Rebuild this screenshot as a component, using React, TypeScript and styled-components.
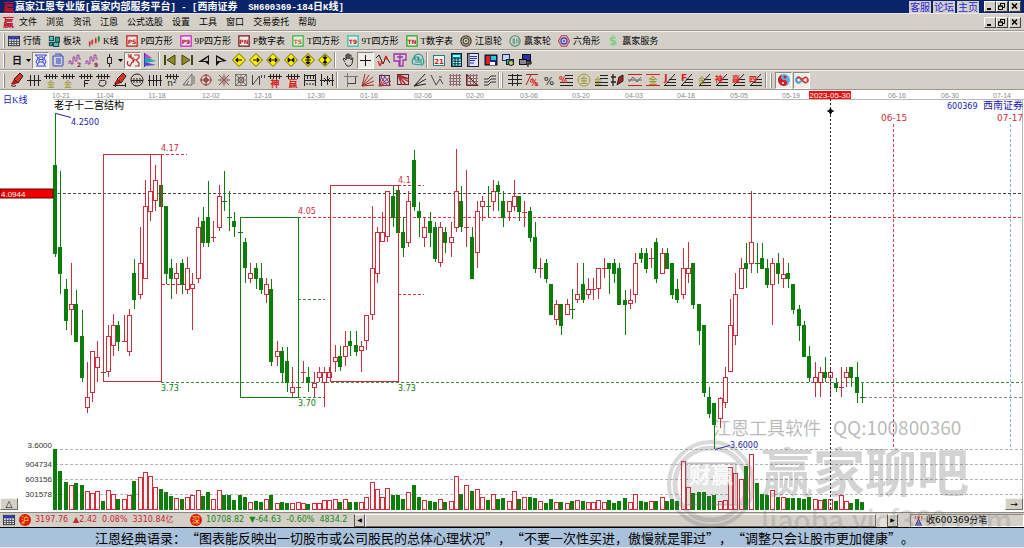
import React from 'react';
import styled, { createGlobalStyle } from 'styled-components';

const SONG = `"Liberation Serif", "Noto Sans CJK SC", serif`;
const VERDANA = `"DejaVu Sans", "Noto Sans CJK SC", sans-serif`;
const CJK = `"Noto Sans CJK SC", sans-serif`;
const RED = '#d02c3c';
const GREEN = '#0a7d0a';

const Global = createGlobalStyle`
  *, *::before, *::after { box-sizing: border-box; }
  body { margin: 0; background: #fff; font-family: ${SONG}; font-size: 9px; color: #000; }
  button { font: inherit; color: inherit; padding: 0; margin: 0; border: 0; background: none; }
  a { color: inherit; text-decoration: none; }
`;

const Page = styled.div`
  position: relative;
  overflow: hidden;
  border-bottom: 1px solid #e8e6e2;
`;

const TitleBar = styled.header`
  display: flex;
  align-items: center;
  height: 14px;
  padding: 0 3px;
  background: #0a246a;
  border-bottom: 1px solid #e8e6e0;
`;

const TitleText = styled.h1`
  flex: 1;
  margin: 0 0 0 1px;
  color: #fff;
  font: bold 10px/12px ${CJK};
  white-space: pre;
`;

const Latin = styled.span`
  font: bold 9px/12px "Liberation Mono", monospace;
`;

const Brand = styled.span`
  width: 11px;
  font: 900 11px/12px ${CJK};
  color: #c0142c;
`;

const TitleLink = styled.a`
  width: 22px;
  height: 12px;
  margin-right: 2px;
  background: #d4d0c8;
  color: #2424e0;
  font: 10px/12px ${CJK};
  text-align: center;
`;

const WinButtons = styled.div`
  display: flex;
  margin-left: 3px;
`;

const WinButton = styled.button<{ $apart?: boolean }>`
  display: flex;
  width: 12px;
  height: 11px;
  margin-left: ${(p) => (p.$apart ? '1px' : '0')};
  background: #d4d0c8;
  border: 1px solid;
  border-color: #fff #404040 #404040 #fff;
`;

const MenuBar = styled.nav`
  display: flex;
  align-items: center;
  height: 17px;
  padding: 0 3px;
  background: #d4d0c8;
  border-bottom: 1px solid #9c9890;
`;

const MenuList = styled.div`
  display: flex;
  flex: 1;
  gap: 9px;
  margin-left: 5px;
`;

const MenuItem = styled.button`
  line-height: 12px;
  white-space: nowrap;
`;

const Toolbar = styled.div<{ $h: number }>`
  display: flex;
  align-items: center;
  height: ${(p) => p.$h}px;
  padding-left: 3px;
  background: #d4d0c8;
  border-top: 1px solid #f4f2ee;
  border-bottom: 1px solid #9c9890;
`;

const Grip = styled.span`
  width: 2px;
  height: 15px;
  margin-right: 3px;
  border-left: 1px solid #fff;
  border-right: 1px solid #8c8880;
`;

const Divider = styled.span<{ $after: number }>`
  width: 2px;
  height: 16px;
  margin-right: ${(p) => p.$after}px;
  border-left: 1px solid #908c84;
  border-right: 1px solid #fff;
`;

const ModuleList = styled.div`
  display: flex;
  gap: 7px;
`;

const ModuleButton = styled.button`
  display: flex;
  align-items: center;
  gap: 3px;
  line-height: 12px;
  white-space: nowrap;
`;

const ToolGroup = styled.div<{ $w: number }>`
  display: flex;
  flex: none;
  justify-content: space-between;
  align-items: center;
  width: ${(p) => p.$w}px;
`;

const ToolButton = styled.button<{ $pressed?: boolean; $narrow?: boolean }>`
  display: flex;
  align-items: center;
  justify-content: center;
  width: ${(p) => (p.$narrow ? 7 : 17)}px;
  height: 17px;
  border: 1px solid;
  border-color: ${(p) => (p.$pressed ? '#8c8880 #fff #fff #8c8880' : 'transparent')};
  background: ${(p) => (p.$pressed ? '#efede9' : 'transparent')};
`;

const Glyph = styled.svg`
  display: block;
  flex: none;
  overflow: visible;
`;

const ChartPane = styled.main`
  position: relative;
  background: #fff;
`;

const ChartSvg = styled.svg`
  display: block;
  width: 100%;
  height: auto;
`;

const PaneButton = styled.button<{ $side: 'left' | 'right' }>`
  position: absolute;
  ${(p) => p.$side}: ${(p) => (p.$side === 'left' ? 0 : 1)}px;
  bottom: 2px;
  width: 18px;
  height: 12px;
  background: #d4d0c8;
  border: 1px solid;
  border-color: #f4f2ee #706c64 #706c64 #f4f2ee;
  font: 9px/9px "DejaVu Sans", sans-serif;
`;

const StatusBar = styled.footer`
  display: flex;
  align-items: center;
  height: 16px;
  padding-left: 3px;
  background: #d4d0c8;
  border-top: 1px solid #8c8880;
  border-bottom: 1px solid #000;
  font: 8px/14px ${VERDANA};
  white-space: nowrap;
`;

const Index = styled.div<{ $tone: string; $w: number }>`
  display: flex;
  flex: none;
  align-items: center;
  gap: 4px;
  width: ${(p) => p.$w}px;
  overflow: hidden;
  color: ${(p) => p.$tone};
`;

const Figures = styled.span`
  display: flex;
  gap: 5px;
`;

const Badge = styled.span`
  flex: none;
  width: 12px;
  height: 12px;
  border-radius: 50%;
  background: #e01808;
  color: #ffe860;
  font: 8px/12px ${CJK};
  text-align: center;
`;

const ScrollTrack = styled.div`
  display: flex;
  flex: 1;
  height: 13px;
  background: #e4e1db;
`;

const ScrollArrow = styled.button`
  width: 11px;
  background: #d4d0c8;
  border: 1px solid;
  border-color: #fff #55514a #55514a #55514a;
  font: 6px/8px "DejaVu Sans", sans-serif;
`;

const ScrollThumb = styled.div`
  flex: 1;
  margin-right: 11px;
  background: #d4d0c8;
  border: 1px solid;
  border-color: #fff #706c64 #706c64 #fff;
`;

const TickPanel = styled.div`
  display: flex;
  align-items: center;
  gap: 3px;
  width: 114px;
  height: 13px;
  margin-left: 12px;
  padding-left: 3px;
  border: 1px solid;
  border-color: #8c8880 #fff #fff #8c8880;
  font: 9px/12px ${VERDANA};
`;

const Ticker = styled.p`
  position: relative;
  z-index: 1;
  margin: 0;
  height: 19px;
  padding-left: 95px;
  background: #a8c2dc;
  font: 13px/19px ${CJK};
  text-spacing-trim: space-all;
  white-space: nowrap;
`;

const Watermark = styled.svg`
  position: absolute;
  right: 0;
  bottom: 0;
  pointer-events: none;
`;

/* ---------- icons ---------- */

type P = { d: string; c?: string; w?: number; f?: string };
const S = ({ d, c = '#222', w = 1, f = 'none' }: P) => <path d={d} stroke={c} strokeWidth={w} fill={f} />;
const F = ({ d, c = '#222' }: P) => <path d={d} fill={c} />;
const T = ({ t, c, x = 7, y = 12, s = 8, b = false }: { t: string; c: string; x?: number; y?: number; s?: number; b?: boolean }) => (
  <text x={x} y={y} fontSize={s} fontWeight={b ? 700 : 400} fill={c} textAnchor="middle" fontFamily={VERDANA}>{t}</text>
);
const Ico = ({ children, w = 14 }: { children: React.ReactNode; w?: number }) => (
  <Glyph width={w} height="14" viewBox={`0 0 ${w} 14`} aria-hidden="true">{children}</Glyph>
);
const Mod = ({ children }: { children: React.ReactNode }) => (
  <Glyph width="12" height="12" viewBox="0 0 14 14" aria-hidden="true">{children}</Glyph>
);

const table = (
  <>
    <rect x="0.5" y="1.5" width="13" height="11" fill="#dde4f8" stroke="#222" />
    <F d="M1 2h12v3h-12z" c="#3038b0" />
    <S d="M1 7.5h12M1 10h12M4 5v7M7 5v7M10 5v7" c="#444" />
  </>
);
const boxed = (t: string, c: string, inner = c) => (
  <>
    <rect x="1" y="1" width="12" height="12" fill="#efe9e4" stroke={c} strokeWidth="1.5" />
    <T t={t} c={inner} y={10} s={7} b />
  </>
);

const modules: [string, React.ReactNode][] = [
  ['行情', table],
  ['板块', <><rect x="1.5" y="1.5" width="5" height="5" fill="#40c8b0" stroke="#134" /><rect x="8.5" y="2.5" width="5" height="6" fill="#2c9c8c" stroke="#134" /><rect x="1.5" y="8.5" width="4" height="4" fill="#2c9c8c" stroke="#134" /><rect x="6.5" y="8.5" width="6" height="5" fill="#40c8b0" stroke="#134" /></>],
  ['K线', <><S d="M2 7v7M5 5v7M9 3v7M12.5 1v8" c="#666" /><F d="M1 8h2v4h-2zM8 4h2v5h-2z" c="#e02020" /><F d="M4 6h2v4h-2z" c="#e02020" /><F d="M11.500 2h2v5h-2z" c="#0a8a0a" /></>],
  ['P四方形', boxed('PS', '#c02020')],
  ['9P四方形', boxed('P9', '#d020d0', '#b01040')],
  ['P数字表', boxed('PN', '#702030', '#c02020')],
  ['T四方形', boxed('TS', '#30c040', '#c07020')],
  ['9T四方形', boxed('T9', '#30c0b0', '#c02020')],
  ['T数字表', boxed('TN', '#20b020', '#c02020')],
  ['江恩轮', <><circle cx="7" cy="7" r="6" fill="none" stroke="#702828" strokeWidth="1.5" /><circle cx="7" cy="7" r="3.500" fill="none" stroke="#286838" strokeWidth="1.5" /><circle cx="7" cy="7" r="1.200" fill="#b02020" /></>],
  ['赢家轮', <><circle cx="7" cy="7" r="6" fill="none" stroke="#508070" strokeWidth="1.200" /><S d="M4 5h3M4 7h3M4 9h3M9 4v6M11 5v4M6 4v7" c="#3c9c80" /></>],
  ['六角形', <><S d="M4 1h6l3.500 6-3.500 6h-6l-3.500-6z" c="#c83040" w={1.2} /><circle cx="7" cy="7" r="3.500" fill="none" stroke="#4040c0" strokeWidth="1.500" /><circle cx="7" cy="7" r="1.200" fill="#4040c0" /></>],
  ['赢家服务', <T t="$" c="#80d080" y={12} s={14} b />],
];

const wave = (n: string) => (
  <><S d="M1 11v-3h2v3h2v-7h2v4h2v-6h2v4h2" c="#a040a0" /><T t={n} c="#802040" x={11} y={14} s={6} b /></>
);
const diamond = (inner: string) => (
  <><path d="M7 0.500L13.500 7L7 13.500L0.500 7Z" fill="#f8f000" stroke="#6c6400" /><S d={inner} c="#000" w={1.2} /></>
);
const combSmall = <S d="M0 3.500h14M2.500 1v5M5.500 1v5M8.500 1v5M11.500 1v5" />;
const comb = <S d="M0 7.500h14M3.500 2v11M7.500 2v11M11.500 2v11" />;
const lines = <S d="M1 12.500h12M4 9.500h9M6 6.500h7M2 12L12 1" />;
const rows = <S d="M6 2.500h8M6 5.500h8M1 9.500h13M1 12.500h13" />;
const fan = (c: string) => <S d="M1 13L4 1M1 13L8 2M1 13L12 4M1 13L13 8M1 13L13 12" c={c} />;
const grid = <S d="M1 2.500h12M1 5.500h12M1 8.500h12M1 11.500h12M2.500 1v12M5.500 1v12M8.500 1v12M11.500 1v12" c="#8c6c6c" />;
const brush = <><path d="M1 11l3-5 4 4-5 2z" fill="#c01818" /><path d="M4 6l6-6 3 3-5 7z" fill="#e03020" stroke="#222" /></>;
const arcs = <S d="M7 1a6 6 0 1 0 0 12a6 6 0 1 0 0-12M1 7.500h12M4 5v5M7 5v5M10 5v5" />;

type Tool = { n: string; i: React.ReactNode; on?: boolean; thin?: boolean };
const drop = <Ico w={5}><F d="M0 6h5l-2.500 3z" c="#000" /></Ico>;

const viewA: Tool[] = [
  { n: '日线周期', i: <Ico><T t="日" c="#111" y={11} s={10} b /></Ico> },
  { n: '周期列表', i: drop, thin: true },
  { n: '画图', on: true, i: <Ico><S d="M1 2h12M2 13h10M2 2l2 3-2 4 2 3M12 2l-2 3 2 4-2 3M5 4h4v5h-4zM5 9l-2 3M9 9l2 3M5 6.500h4" c="#3040e0" /></Ico> },
  { n: '信息', i: <Ico><S d="M2 3h10v9q0 1-1 1h-8q-1 0-1-1zM4 1h6v2M5 6h5M5 8h5M5 10h5" c="#3040d0" /></Ico> },
  { n: '二段', i: <Ico>{wave('2')}</Ico> },
  { n: '九段', i: <Ico>{wave('9')}</Ico> },
  { n: '蜡烛', i: <Ico><S d="M7.500 1v3M7.500 11v3M5.500 4.500h4v6h-4z" c="#222" /></Ico> },
  { n: '蜡烛列表', i: drop, thin: true },
  { n: '方阵', on: true, i: <Ico><S d="M2 4h3v-3M2 1l4 5M2 8q-2 4 2 5l2-4M8 2h5v3l-3 2 3 3v3h-4M7 4v6M9 6l-2 3" c="#c02828" w={1.2} /></Ico> },
  { n: '分布', i: <Ico><F d="M2 0l7 5-7 2z" c="#d040c0" /><F d="M2 4l11 4-11 2z" c="#20a8a8" /><F d="M2 9l11 3-11 1z" c="#6048d0" /><S d="M1.500 0v14" c="#3040c0" /></Ico> },
];
const viewB: Tool[] = [
  { n: '最前', i: <Ico><path d="M12 2v10L4 7z" fill="#8c8c20" stroke="#444410" /><S d="M2 2v10" w={2} c="#444410" /></Ico> },
  { n: '最后', i: <Ico><path d="M2 2v10l8-5z" fill="#8c8c20" stroke="#444410" /><S d="M12 2v10" w={2} c="#444410" /></Ico> },
  { n: '向左', i: <Ico><F d="M12 2v10l-4-3h-7z" c="#111" /><F d="M11 4v4h-5z" c="#bbb" /></Ico> },
  { n: '向右', i: <Ico><F d="M2 2v11l4-4 7-1z" c="#111" /><F d="M3 4l6 4h-6z" c="#bbb" /></Ico> },
  { n: '左移', i: <Ico>{diamond('M4 7h6M6 5l-2 2 2 2')}</Ico> },
  { n: '右移', i: <Ico>{diamond('M4 7h6M8 5l2 2-2 2')}</Ico> },
  { n: '横向放大', i: <Ico>{diamond('M3 7h8M5 5l-2 2 2 2M9 5l2 2-2 2')}</Ico> },
  { n: '横向缩小', i: <Ico>{diamond('M3 7h8M4 5l2 2-2 2M10 5l-2 2 2 2')}</Ico> },
  { n: '纵向放大', i: <Ico>{diamond('M7 3v8M5 5l2-2 2 2M5 9l2 2 2-2M4 7h6')}</Ico> },
  { n: '纵向缩小', i: <Ico>{diamond('M7 2v10M5 4l2 2 2-2M5 10l2-2 2 2')}</Ico> },
];
const viewC: Tool[] = [
  { n: '拖动', i: <Ico><S d="M4 9l-2-3 1-1 2 2v-5h1v4M6 6v-5h2v5M8 6v-4h2v5l1-2h1l-1 6-2 2h-3l-2-3" c="#333" /></Ico> },
  { n: '十字光标', on: true, i: <Ico><S d="M7.500 2v11M2 7.500h11" c="#111" /></Ico> },
  { n: '转折', i: <Ico><S d="M0 5l3-3 4 9 3-7 4 6" /><T t="v" c="#e02020" x={4} y={13} s={8} b /><T t="A" c="#e02020" x={10} y={7} s={6} b /></Ico> },
  { n: '标记', i: <Ico><S d="M1 1h12v6h-3v6h-4v-5h-5zM4 4h6M7 2v10" c="#a030b0" w={1.3} /></Ico> },
  { n: '云图', i: <Ico><S d="M2 11q-2-4 1-6 0-4 5-4 4 1 4 5 2 4-1 6zM4 4h3v3h-3zM8 4v6M10 6v5M4 9h3" c="#209c98" w={1.2} /></Ico> },
];
const viewD: Tool[] = [
  { n: '日历', i: <Ico><rect x="1.500" y="2.500" width="11" height="10" fill="#f4f4f4" stroke="#208080" /><T t="21" c="#d02020" y={11} s={7} b /></Ico> },
  { n: '计算器', i: <Ico><rect x="2.500" y="0.500" width="10" height="13" fill="#107c94" stroke="#023" /><F d="M4 2h7v2h-7z" c="#9fe" /><S d="M4 7h8M4 9.500h8M4 12h8" c="#fff" /><S d="M6 5v9M9 5v9" c="#023" /></Ico> },
  { n: '表格', i: <Ico><rect x="1.500" y="0.500" width="11" height="13" fill="#dfe4ff" stroke="#222" /><S d="M4 3.500h7M4 5.500h7M4 7.500h5M4 10h4" c="#3030c0" /><S d="M3 0v14" /></Ico> },
  { n: '保存', i: <Ico><rect x="1" y="2" width="12" height="10" fill="#1a2890" stroke="#111" /><F d="M2 3h4v8h-4z" c="#e02020" /><F d="M7 3h5v4h-5z" c="#30c8c8" /><F d="M6 9h5v3h-5z" c="#fff" /></Ico> },
  { n: '复制', i: <Ico><rect x="1.500" y="1.500" width="7" height="6" fill="#c8d0f0" stroke="#222870" /><rect x="5.500" y="6.500" width="7" height="5" fill="#40a080" stroke="#123" /><circle cx="10" cy="10" r="2.500" fill="#c8d060" stroke="#123" /></Ico> },
  { n: '联机', i: <Ico><rect x="4.500" y="1.500" width="8" height="6" fill="#2830b0" stroke="#111" /><rect x="1.500" y="6.500" width="7" height="5" fill="#888" stroke="#111" /><path d="M8 8h5v3h-3v3" fill="#555" stroke="#111" /></Ico> },
];

const drawA: Tool[] = [
  { n: '画笔', i: <Ico>{brush}<S d="M1 12.500q3 2 5 0" /></Ico> },
  { n: '等分', i: <Ico>{comb}</Ico> },
  { n: '黄金分割一', i: <Ico>{combSmall}<T t="金" c="#908c10" y={14} s={8} /></Ico> },
  { n: '黄金分割二', i: <Ico>{combSmall}<T t="金" c="#908c10" y={14} s={8} /></Ico> },
  { n: '斐波那契', i: <Ico>{combSmall}<S d="M5.500 14v-6.500h5M5 10.500h4" /></Ico> },
  { n: '螺旋', i: <Ico>{combSmall}<S d="M3 8q8-2 7 2t-5 3-1-4" /></Ico> },
  { n: '标尺笔', i: <Ico>{brush}<S d="M0 12.500h13M2.500 10v4M12.500 10v4" /></Ico> },
  { n: '圆周', i: <Ico>{arcs}</Ico> },
  { n: '周期线', i: <Ico><S d="M0 7.500h14M1.500 2v11M5.500 2v11M8.500 2v11M12.500 2v11" /></Ico> },
  { n: '平方', i: <Ico>{combSmall}<T t="n²" c="#222" y={13} s={9} /></Ico> },
  { n: '角度', i: <Ico><S d="M1 12L10 1v11zM5 12q0-3 2-4M12 3v8" c="#666" /></Ico> },
  { n: '圆形', i: <Ico><circle cx="7" cy="7" r="5" fill="none" stroke="#c83030" /><S d="M1 7h12M7 1v12" c="#a02828" /><circle cx="7" cy="7" r="2" fill="none" stroke="#444" /></Ico> },
  { n: '八方', i: <Ico><S d="M1 7h12M7 1v12M2 2l10 10M2 12L12 2" c="#a04848" /><circle cx="7" cy="7" r="3.500" fill="none" stroke="#888" /></Ico> },
  { n: '方格', i: <Ico><rect x="1.500" y="1.500" width="11" height="11" fill="none" stroke="#777" /><S d="M1 7h12M7 1v12M2 2l10 10M2 12L12 2" c="#907070" /><rect x="4.500" y="4.500" width="5" height="5" fill="none" stroke="#666" /></Ico> },
  { n: '波浪', i: <Ico><S d="M1.500 2v10l7-9v9M10.500 2v3M13.500 2v3" c="#444" /></Ico> },
  { n: '神奇', i: <Ico>{combSmall}<T t="神" c="#e01818" y={14} s={9} b /></Ico> },
  { n: '赢家', i: <Ico>{combSmall}<T t="赢" c="#e01818" y={14} s={9} b /></Ico> },
  { n: '区间', i: <Ico><S d="M1.500 1v12M12.500 1v12M1 2.500h12M1 7.500h12M4.500 3v3M7.500 3v3M10.500 3v3M3 11h2M6 11h2M9 11h2" /></Ico> },
  { n: '对称', i: <Ico><S d="M1.500 1v12M7.500 3v9M12.500 1v12M0 7.500h14M4 5l2 2-2 2M10 5l-2 2 2 2" /></Ico> },
];
const drawB: Tool[] = [
  { n: '矩形', i: <Ico><rect x="3.500" y="3.500" width="8" height="7" fill="none" stroke="#444" /><S d="M0 3.500h14M3.500 0v14" c="#777" /></Ico> },
  { n: '扇形', i: <Ico>{fan('#a82828')}</Ico> },
  { n: '扇形方框', i: <Ico><rect x="1.500" y="2.500" width="10" height="10" fill="none" stroke="#302860" />{fan('#b03040')}<S d="M5 2l7 8M3 4l6 8" c="#5840b0" /></Ico> },
  { n: '反向扇形', i: <Ico><rect x="1.500" y="1.500" width="11" height="10" fill="none" stroke="#502840" /><S d="M2 2l4 10M2 2l8 10M2 2l11 7M2 2l11 4" c="#b02838" w={1.4} /></Ico> },
  { n: '速度线', i: <Ico><S d="M1 13L12 1M1 13L13 6M1 13L13 11" /></Ico> },
  { n: '折线', i: <Ico><S d="M1 2l5 10 4-6 3 5M9 4h3" c="#444" /></Ico> },
  { n: '网格', i: <Ico>{grid}</Ico> },
  { n: '网格角', i: <Ico>{grid}<S d="M1.500 1v11.500h12M1 1l12 12" c="#722" /></Ico> },
  { n: '平行线', i: <Ico><S d="M1 6h4l3-3h5M1 9h4l3-3h5M1 12h4l3-3h5" c="#333" /></Ico> },
];
const drawC: Tool[] = [
  { n: '江恩线', i: <Ico><S d="M0 2.500h14M0 6.500h14M0 10.500h14M4.500 1v12M9.500 1v12" /></Ico> },
  { n: '区间百分比', i: <Ico><S d="M1 1.500h12M1 12L6 2M7 5l6 8" c="#a02828" /><T t="%" c="#e02020" x={9} y={13} s={8} b /></Ico> },
  { n: '百分比', i: <Ico><T t="%" c="#222" y={12} s={11} /></Ico> },
  { n: '百分比线', i: <Ico>{rows}<T t="%" c="#e02020" x={4} y={10} s={8} b /></Ico> },
  { n: '金圆', i: <Ico><circle cx="7" cy="7" r="6" fill="none" stroke="#a09c20" /><T t="金" c="#908c10" y={10} s={8} /></Ico> },
  { n: '金线', i: <Ico>{rows}<T t="金" c="#908c10" x={4} y={11} s={8} /></Ico> },
  { n: '笔线', i: <Ico><S d="M2 1v12M0 4h5M0 9h5" w={1.3} /><path d="M6 12l2-8 4-2v6z" fill="#b02020" stroke="#222" /></Ico> },
  { n: '波段', i: <Ico><S d="M0 1.500h14M0 12.500h14" c="#c02020" /><S d="M1 9l4-5 4 5 4-5M0 7h14" c="#666" /></Ico> },
  { n: '金波段', i: <Ico><S d="M0 1.500h14M0 12.500h14" c="#e02020" /><T t="金" c="#908c10" y={11} s={9} /></Ico> },
  { n: 'J线', i: <Ico>{lines}<T t="J" c="#e02020" x={3} y={8} s={9} b /></Ico> },
  { n: 'F线', i: <Ico>{lines}<T t="F" c="#e02020" x={4} y={8} s={9} b /></Ico> },
  { n: '金斜线', i: <Ico>{lines}<T t="金" c="#908c10" x={4} y={10} s={8} /></Ico> },
  { n: '神斜线', i: <Ico>{lines}<T t="神" c="#e02020" x={4} y={9} s={8} b /></Ico> },
  { n: '赢斜线', i: <Ico>{lines}<T t="赢" c="#e02020" x={4} y={9} s={8} b /></Ico> },
  { n: '四斜线', i: <Ico>{lines}<T t="四" c="#e02020" x={4} y={9} s={8} b /></Ico> },
];
const drawD: Tool[] = [
  { n: '太极', on: true, i: <Ico><circle cx="7" cy="7" r="6" fill="#58b0e8" /><path d="M7 1a6 6 0 0 0 0 12a3 3 0 0 0 0-6a3 3 0 0 1 0-6" fill="#d81c1c" /><circle cx="8" cy="4" r="1.500" fill="#d81c1c" /><circle cx="6" cy="10" r="1" fill="#fff" /></Ico> },
  { n: '无限', on: true, i: <Ico><S d="M7 7q-3-4-5-2t0 4 5-2" c="#4898d0" w={2} /><S d="M2 5q2-2 5 2t5 2M7 7q3-4 5-2t0 4" c="#d03838" w={1.7} /></Ico> },
];

const Tools = ({ items, w }: { items: Tool[]; w: number }) => (
  <ToolGroup $w={w}>
    {items.map((t) => (
      <ToolButton key={t.n} aria-label={t.n} aria-pressed={t.on} $pressed={t.on} $narrow={t.thin}>{t.i}</ToolButton>
    ))}
  </ToolGroup>
);

/* ---------- chart ---------- */

/* colour, high, body top, body bottom, low, volume top (chart units) */
const candles = `
g113,165,253,257,449 g171,247,273,294,471 g279,289,320,330,482 r263,304,309,335,485 g290,304,341,341,483 g310,336,377,382,485
r362,397,407,413,491 r351,351,392,402,493 r341,357,367,382,491 g367,372,372,377,501 r325,336,371,377,490 r314,325,345,356,494
g321,325,341,351,499 r315,341,341,341,499 r309,315,351,356,495 g259,273,299,309,481 r227,263,294,299,477 r180,206,278,278,472
r154,191,211,221,476 r165,180,200,211,487 g154,185,206,206,489 g206,206,273,284,492 g259,268,278,299,496 r263,273,278,294,498
g259,263,284,294,499 r257,268,289,294,497 r273,284,288,330,495 r217,227,278,283,490 g207,221,242,247,496 g181,217,242,247,492
r221,237,237,242,499 r185,196,227,231,490 g171,201,201,211,495 g191,217,217,231,495 g212,221,226,237,500 g230,232,232,234,495
g238,242,267,283,497 r263,273,278,283,502 g263,268,278,289,501 g263,278,289,294,502 r278,284,294,303,499 g279,289,361,366,495
r341,351,356,366,503 g347,351,372,382,502 g347,361,382,392,503 r367,387,392,397,503 r372,387,387,397,502 r361,372,372,382,503
g367,377,382,392,504 r372,383,387,397,503 r367,372,377,382,503 r367,372,382,407,500 r367,372,377,377,500 r345,357,361,372,499
g346,356,366,371,502 r331,346,356,366,499 g331,341,345,356,502 g331,345,351,356,502 r341,346,350,372,502 r315,315,340,350,497
r206,268,314,320,482 r227,232,273,283,489 r212,232,241,241,497 r191,191,236,242,488 g186,196,217,227,495 g186,190,232,232,495
g217,232,247,257,499 r191,201,242,247,492 g150,160,206,211,485 g202,211,217,237,497 r217,227,237,247,500 g212,221,232,247,501
g222,227,258,262,502 r222,227,262,267,499 g227,232,242,253,502 r222,237,242,257,501 r149,191,227,232,476 g186,201,226,232,494
r170,227,227,247,485 g227,237,278,278,491 r201,211,252,268,489 r196,201,206,221,497 g186,206,206,217,500 r180,191,201,211,494
g181,185,191,211,499 g191,201,217,227,498 r201,201,211,221,501 r180,196,206,211,491 g196,196,211,221,499 r201,212,212,227,497
g207,211,237,242,497 g222,237,268,273,498 r258,268,268,278,501 g259,263,278,283,503 g284,284,314,314,499 r300,304,319,325,502
g304,304,325,335,502 r299,304,314,314,503 g289,309,309,319,501 r263,294,299,303,500 g263,284,299,303,501 r278,289,294,299,502
r278,289,289,300,502 r268,268,288,299,500 r258,268,268,278,502 g263,263,268,294,500 g259,263,273,283,503 g263,268,304,304,501
g290,300,304,335,498 r289,300,303,309,502 r253,263,294,303,494 g248,253,258,263,501 g248,253,268,273,502 r248,258,258,268,501
g238,242,278,283,501 r248,253,273,273,497 g248,253,268,268,501 g263,263,294,299,499 g279,289,299,303,501 r248,268,294,299,461
r242,268,273,283,487 g263,263,304,309,493 g304,304,330,345,492 g325,325,392,397,492 g387,397,413,418,496 g403,403,424,449,495
r397,398,418,428,501 r367,377,402,408,500 r299,325,371,371,467 r273,294,335,345,473 r258,268,288,288,479 g243,263,268,288,466
r191,242,263,273,454 g243,263,263,273,483 g243,258,268,268,494 g259,268,284,288,495 r258,263,284,325,490 g253,263,273,284,497
r258,274,278,288,497 g263,273,278,288,498 g284,284,309,314,498 g305,309,325,341,498 g321,325,356,356,499 g346,356,377,382,497
r362,377,382,397,499 r367,372,382,397,500 g357,372,377,382,499 r367,372,377,397,499 g378,383,387,392,501 r367,387,387,397,495
r367,372,377,387,501 g367,367,377,387,503 g362,377,392,403,499 g383,397,397,403,502`
  .trim()
  .split(/\s+/)
  .map((s) => ({ up: s[0] === 'r', v: s.slice(1).split(',').map(Number) }));

const axisDates: [number, string][] = [
  [61, '10-21'], [105, '11-04'], [157, '11-18'], [211, '12-02'], [263, '12-16'], [316, '12-30'], [369, '01-16'], [423, '02-06'], [475, '02-20'],
  [529, '03-06'], [581, '03-20'], [634, '04-03'], [686, '04-18'], [739, '05-05'], [791, '05-19'], [897, '06-16'], [950, '06-30'], [1002, '07-14'],
];

const Candle = ({ i, up, v }: { i: number; up: boolean; v: number[] }) => {
  const x = Math.floor(55.7 + i * 5.273);
  const [hi, top, bot, lo, vol] = v;
  const c = up ? RED : GREEN;
  const flat = top === bot;
  return (
    <g shapeRendering="crispEdges">
      {hi < top && <rect x={x} y={hi} width="1" height={top - hi} fill={c} />}
      {lo > bot && <rect x={x} y={bot} width="1" height={lo - bot} fill={c} />}
      {flat && <rect x={x - 2} y={top} width="5" height="1" fill={c} />}
      {!flat && up && <rect x={x - 1.5} y={top + 0.5} width="4" height={bot - top} fill="#fff" stroke={c} />}
      {!flat && !up && <rect x={x - 2} y={top} width="4" height={bot - top + 1} fill={c} />}
      {up
        ? <rect x={x - 1.5} y={vol + 0.5} width="4" height={509 - vol} fill="#fff5f5" stroke={c} />
        : <rect x={x - 2} y={vol} width="4" height={510 - vol} fill={c} />}
    </g>
  );
};

const Dash = ({ d, c }: { d: string; c: string }) => (
  <path d={d} stroke={c} fill="none" strokeDasharray="3 2" shapeRendering="crispEdges" />
);

const Label = ({ x, y, c, t }: { x: number; y: number; c: string; t: string }) => (
  <text x={x} y={y} fill={c} fontFamily={VERDANA} fontSize="8">{t}</text>
);

const Chart = () => (
  <ChartSvg viewBox="0 90 1024 422" role="img" aria-label="西南证券 日K线">
    <path d="M54 99.500H1024M1022.500 99V510" stroke="#b8b8b8" shapeRendering="crispEdges" />
    <g fontFamily='"Liberation Sans Narrow", "Liberation Sans", sans-serif' fontSize="7" fill="#8a8a8a" textAnchor="middle">
      {axisDates.map(([x, t]) => <text key={t} x={x} y="98">{t}</text>)}
    </g>
    <g fill="#333" fontFamily='"Liberation Sans", sans-serif' fontSize="8" textAnchor="end">
      <text x="52" y="448">3.6000</text>
      <text x="52" y="467">904734</text>
      <text x="52" y="482">603156</text>
      <text x="52" y="497">301578</text>
    </g>
    <text x="3" y="103" fill="#1818c0" fontFamily={SONG} fontSize="9">日K线</text>
    <text x="54" y="109" fontFamily={CJK} fontSize="10">老子十二宫结构</text>

    <Dash c="#b4b4b4" d="M55 449.500H1022M55 464.500H1022M55 479.500H1022M55 494.500H1022" />
    <Dash c="#444" d="M53 193.500H1022" />
    <Dash c="#dc3040" d="M161 154.500H187M162 284.500H187M298 217.500H1022M398 185.500H424M398 294.500H424" />
    <Dash c="#3c8c3c" d="M161 382.500H1022M298 397.500H325M298 299.500H325" />
    <Dash c="#888" d="M864 397.500H1022" />
    <Dash c="#dc4050" d="M893.500 124V449" />
    <Dash c="#80b8e0" d="M1010.500 124V449" />

    {candles.map((k, i) => <Candle key={i} i={i} {...k} />)}

    <g fill="none" shapeRendering="crispEdges">
      <path d="M103.500 154.500H161.500V381.500H103.500ZM330.500 185.500H398.500V381.500H330.500Z" stroke={RED} />
      <path d="M240.500 217.500H298.500V397.500H240.500Z" stroke={GREEN} />
    </g>
    <path d="M830.500 99V510" stroke="#222" strokeDasharray="2 2" strokeWidth="1" shapeRendering="crispEdges" />
    <path d="M830.500 108l1 2.500 2 0.500-2 1-1 2.500-1-2.500-2-1 2-0.500z" fill="#000" stroke="#000" />
    <path d="M56 113.500l15 4M715 449.500l15-4" stroke="#2020b0" fill="none" />

    <Label x={71} y={125} c="#1818a8" t="4.2500" />
    <Label x={161} y={151} c={RED} t="4.17" />
    <Label x={298} y={214} c={RED} t="4.05" />
    <Label x={398} y={183} c={RED} t="4.1" />
    <Label x={161} y={391} c={GREEN} t="3.73" />
    <Label x={298} y={406} c={GREEN} t="3.70" />
    <Label x={398} y={391} c={GREEN} t="3.73" />
    <Label x={730} y={448} c="#1818a8" t="3.6000" />
    <g fontFamily={VERDANA} fontSize="9" fill={RED}>
      <text x="881" y="121">06-15</text>
      <text x="997" y="121">07-17</text>
    </g>
    <text x="947" y="109" fill="#1818b0" fontFamily={VERDANA} fontSize="8">600369</text>
    <text x="1023" y="109" fill="#1818b0" fontFamily={CJK} fontSize="10" textAnchor="end">西南证券</text>

    <rect x="809" y="91" width="42" height="8" fill="#e81010" />
    <text x="830" y="98" fill="#fff" fontFamily='"Liberation Sans", sans-serif' fontSize="8" textAnchor="middle">2023-05-30</text>
    <path d="M0 189h53v9h-53z" fill="#f00000" stroke="#600" />
    <text x="1" y="197" fill="#fff" fontFamily='"Liberation Sans", sans-serif' fontSize="8">4.0944</text>
  </ChartSvg>
);

const WindowControls = () => (
  <WinButtons>
    <WinButton aria-label="最小化"><Glyph width="10" height="9"><F d="M2 6h4v2h-4z" c="#000" /></Glyph></WinButton>
    <WinButton aria-label="还原"><Glyph width="10" height="9"><S d="M3.500 3v-1.500h4v4h-1.500M1.500 4h4v3.500h-4zM3 1.500h5M1 4h5" c="#000" /></Glyph></WinButton>
    <WinButton aria-label="关闭" $apart><Glyph width="10" height="9"><S d="M2 1.500l5 5M7 1.500l-5 5" c="#000" w={1.5} /></Glyph></WinButton>
  </WinButtons>
);

export default function App() {
  return (
    <>
      <Global />
      <Page lang="zh-CN">
        <TitleBar>
          <Brand>赢</Brand>
          <TitleText>
            赢家江恩专业版<Latin>[</Latin>赢家内部服务平台<Latin>{'] - ['}</Latin>西南证券<Latin>{'  SH600369-184'}</Latin>日<Latin>K</Latin>线<Latin>]</Latin>
          </TitleText>
          {['客服', '论坛', '主页'].map((t) => <TitleLink key={t} href="#">{t}</TitleLink>)}
          <WindowControls />
        </TitleBar>
        <MenuBar>
          <Brand>赢</Brand>
          <MenuList>
            {['文件', '浏览', '资讯', '江恩', '公式选股', '设置', '工具', '窗口', '交易委托', '帮助'].map((t) => (
              <MenuItem key={t}>{t}</MenuItem>
            ))}
          </MenuList>
          <WindowControls />
        </MenuBar>
        <Toolbar $h={19}>
          <Grip />
          <ModuleList>
            {modules.map(([t, icon]) => <ModuleButton key={t}><Mod>{icon}</Mod>{t}</ModuleButton>)}
          </ModuleList>
        </Toolbar>
        <Toolbar $h={20}>
          <Grip />
          <Tools items={viewA} w={150} />
          <Divider $after={1} />
          <Tools items={viewB} w={173} />
          <Divider $after={3} />
          <Tools items={viewC} w={87} />
          <Divider $after={2} />
          <Tools items={viewD} w={104} />
        </Toolbar>
        <Toolbar $h={20}>
          <Grip />
          <Tools items={drawA} w={328} />
          <Divider $after={4} />
          <Tools items={drawB} w={156} />
          <Divider $after={1} />
          <Grip />
          <Tools items={drawC} w={259} />
          <Divider $after={3} />
          <Grip />
          <Tools items={drawD} w={35} />
        </Toolbar>
        <ChartPane>
          <Chart />
          <PaneButton $side="left" aria-label="展开">△</PaneButton>
          <PaneButton $side="right" aria-label="前进">→</PaneButton>
        </ChartPane>
        <StatusBar>
          <Index $tone="#c82828" $w={187}>
            <Mod>{table}</Mod>
            <Badge>沪</Badge>
            <Figures><span>3197.76</span><span>▲2.42</span><span>0.08%</span><span>3310.84亿</span></Figures>
          </Index>
          <Index $tone="#188818" $w={164}>
            <Badge>深</Badge>
            <Figures><span>10708.82</span><span>▼-64.63</span><span>-0.60%</span><span>4834.2</span></Figures>
          </Index>
          <ScrollTrack>
            <ScrollArrow aria-label="向左滚动">◀</ScrollArrow>
            <ScrollThumb />
            <ScrollArrow aria-label="向右滚动">▶</ScrollArrow>
          </ScrollTrack>
          <TickPanel>
            <Glyph width="9" height="11" viewBox="0 0 9 11"><S d="M1.500 11L4.500 4l3 7M3 8h3M2.500 10h4" c="#2828a0" /><S d="M1.500 1q-1 1.500 0 3M7.500 1q1 1.500 0 3" c="#d03030" /><circle cx="4.500" cy="2.500" r="1.200" fill="#d03030" /></Glyph>
            收600369分笔
          </TickPanel>
        </StatusBar>
        <Ticker>江恩经典语录：“图表能反映出一切股市或公司股民的总体心理状况”，“不要一次性买进，傲慢就是罪过”，“调整只会让股市更加健康”。</Ticker>
        <Watermark width="364" height="137" viewBox="660 411 364 137" aria-hidden="true">
          <g fill="#6c6c6c" fontFamily={CJK}>
            <text x="713" y="436" fontSize="18" fillOpacity="0.48">江恩工具软件</text>
            <text x="833" y="436" fontSize="19" fillOpacity="0.48">QQ:100800360</text>
            <text x="761" y="493" fontSize="52" fontWeight="700" fillOpacity="0.3">赢家聊吧</text>
            <text x="761" y="532" fontSize="28" fontWeight="500" fillOpacity="0.22">liaoba.yjcf360.com</text>
          </g>
          <g fill="none" stroke="#6c6c6c" strokeOpacity="0.26">
            <circle cx="711" cy="485" r="42" strokeWidth="4" />
            <circle cx="711" cy="485" r="36" strokeWidth="5" />
            <rect x="686" y="464" width="50" height="42" strokeWidth="2" fill="#6c6c6c" fillOpacity="0.18" />
          </g>
          <text x="689" y="484" fontSize="22" fontWeight="700" fill="#fff" fillOpacity="0.85" fontFamily={CJK}>财赢</text>
        </Watermark>
      </Page>
    </>
  );
}
